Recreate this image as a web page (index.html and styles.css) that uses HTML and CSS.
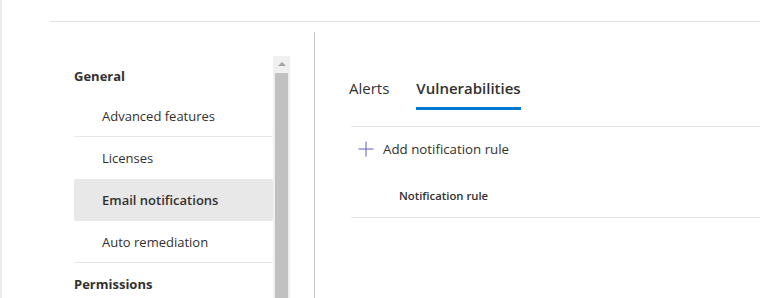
FILE: index.html
```html
<!DOCTYPE html>
<html lang="en">
<head>
    <meta charset="UTF-8">
    <meta name="viewport" content="width=device-width, initial-scale=1.0">
    <title>Settings - Email notifications</title>
    <link rel="stylesheet" href="styles.css">
</head>
<body>
    <div class="shell">
        <div class="page">
            <div class="layout">
                <aside class="sidebar">
                    <nav class="nav">
                        <div class="nav-heading">General</div>
                        <div class="nav-item">Advanced features</div>
                        <div class="nav-item">Licenses</div>
                        <div class="nav-item selected">Email notifications</div>
                        <div class="nav-item">Auto remediation</div>
                        <div class="nav-heading">Permissions</div>
                    </nav>
                    <div class="scrollbar">
                        <div class="scroll-arrow"></div>
                        <div class="scroll-thumb"></div>
                    </div>
                </aside>
                <main class="main">
                    <div class="tabs">
                        <div class="tab">Alerts</div>
                        <div class="tab active">Vulnerabilities</div>
                    </div>
                    <div class="panel">
                        <div class="command-bar">
                            <button class="add-btn">
                                <svg width="16" height="16" viewBox="0 0 16 16">
                                    <path d="M8 0.5v15M0.5 8h15" stroke="#5b5fc7" stroke-width="1" fill="none"/>
                                </svg>
                                <span>Add notification rule</span>
                            </button>
                        </div>
                        <div class="table-header">
                            <div class="col">Notification rule</div>
                        </div>
                    </div>
                </main>
            </div>
        </div>
    </div>
</body>
</html>
```

FILE: styles.css
```css
body {
    margin: 0;
    font-family: "Segoe UI", "Open Sans", sans-serif;
    color: #323130;
    background-color: #fff;
    overflow: hidden;
}
.shell {
    display: flex;
    height: 298px;
    border-left: 2px solid #ebebeb;
}
.page {
    flex: 1;
    margin-left: 48px;
    padding-top: 21px;
}
.layout {
    display: flex;
    border-top: 1px solid #e1e1e1;
    height: 276px;
}
.sidebar {
    width: 240px;
    padding-left: 24px;
    padding-top: 34px;
    display: flex;
}
.nav {
    width: 199px;
}
.nav-heading {
    font-size: 13px;
    font-weight: 700;
    height: 40px;
    line-height: 42px;
}
.nav-heading:first-child {
    height: 39px;
    line-height: 41px;
}
.nav-item {
    font-size: 13px;
    height: 42px;
    line-height: 42px;
    padding-left: 28px;
    border-bottom: 1px solid #e6e6e6;
    box-sizing: border-box;
    border-radius: 2px;
}
.nav-item:has(+ .selected) {
    border-bottom-color: transparent;
}
.nav-item.selected {
    background-color: #e8e8e8;
    font-weight: 600;
    border-bottom-color: transparent;
}
.scrollbar {
    width: 17px;
    background-color: #f0f0f0;
    display: flex;
    flex-direction: column;
    align-items: center;
}
.scroll-arrow {
    margin-top: 6px;
    width: 0;
    height: 0;
    border-left: 4px solid transparent;
    border-right: 4px solid transparent;
    border-bottom: 4px solid #a3a3a3;
}
.scroll-thumb {
    margin-top: 7px;
    width: 13px;
    flex: 1;
    background-color: #c1c1c1;
}
.main {
    flex: 1;
    margin-top: 10px;
    border-left: 1px solid #c8c8c8;
    padding-left: 34px;
}
.tabs {
    display: flex;
    gap: 27px;
    padding-top: 45px;
}
.tab {
    font-size: 15px;
    line-height: 22px;
    padding-bottom: 8px;
    border-bottom: 3px solid transparent;
}
.tab.active {
    font-weight: 600;
    border-bottom-color: #0078d4;
}
.panel {
    margin-left: 2px;
    margin-top: 16px;
    border-top: 1px solid #e6e6e6;
}
.command-bar {
    padding-top: 14px;
}
.add-btn {
    display: flex;
    align-items: center;
    gap: 9px;
    background: none;
    border: none;
    padding: 0 0 0 7px;
    font-family: inherit;
    font-size: 13.3px;
    color: #323130;
    height: 16px;
}
.table-header {
    margin-top: 25px;
    border-bottom: 1px solid #e6e6e6;
    padding-left: 48px;
}
.table-header .col {
    font-size: 11.3px;
    font-weight: 600;
    height: 35px;
    line-height: 27px;
}
```
